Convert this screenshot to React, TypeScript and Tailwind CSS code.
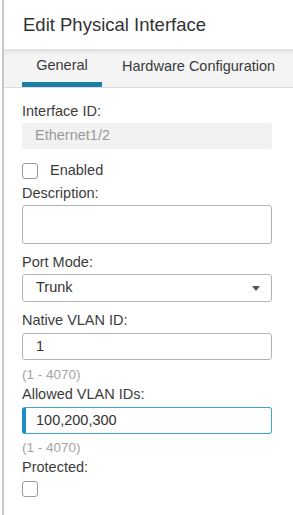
import React from 'react';

const font = { fontFamily: '"Liberation Sans", Arial, sans-serif' };

const Label: React.FC<{ children: React.ReactNode; className?: string }> = ({ children, className = '' }) => (
  <div className={`text-[14.5px] leading-[16px] text-[#3c3c3c] ${className}`}>{children}</div>
);

const Box: React.FC<{ className?: string }> = ({ className = '' }) => (
  <div className={`w-[16px] h-[16px] rounded-[3px] border border-[#9a9a9a] bg-white ${className}`} />
);

export default function App() {
  return (
    <div className="w-[293px] h-[515px] bg-white flex" style={font}>
      <div className="w-[2px] bg-white" />
      <div className="w-[2px] bg-[#c8c8c8]" />
      <div className="flex-1 flex flex-col">
        <div className="h-[49px] flex items-center pl-[19px] text-[18.5px] text-[#333]">
          Edit Physical Interface
        </div>
        <div className="h-[39px] bg-[#f4f4f4] border-b border-[#dcdcdc] flex items-end pl-[18px] relative">
          <div className="absolute left-0 right-0 top-0 h-[6px] bg-gradient-to-b from-[#e0e0e0] to-[#f4f4f4]" />
          <div className="w-[80px] h-full flex flex-col items-center justify-end">
            <span className="text-[14.5px] text-[#3a3a3a] mb-[5px]">General</span>
            <div className="w-full h-[5px] bg-[#1b7fa6]" />
          </div>
          <span className="ml-[20px] text-[14.5px] text-[#3a3a3a] mb-[9px]">Hardware Configuration</span>
        </div>
        <div className="pl-[18px] pr-[21px] flex flex-col">
          <Label className="mt-[15px]">Interface ID:</Label>
          <div className="mt-[4px] h-[26px] rounded-[3px] bg-[#f2f2f2] flex items-center pl-[13px] text-[14.5px] text-[#9a9a9a]">
            Ethernet1/2
          </div>
          <div className="mt-[14px] h-[16px] flex items-center">
            <Box />
            <span className="ml-[12px] text-[14.5px] text-[#3c3c3c]">Enabled</span>
          </div>
          <Label className="mt-[6px]">Description:</Label>
          <div className="mt-[4px] h-[39px] rounded-[3px] border border-[#b4b4b4] bg-white" />
          <Label className="mt-[10px]">Port Mode:</Label>
          <div className="mt-[4px] h-[28px] rounded-[3px] border border-[#b4b4b4] bg-white flex items-center pl-[13px] pr-[11px] text-[14.5px] text-[#333]">
            <span className="flex-1">Trunk</span>
            <svg width="8" height="5" viewBox="0 0 8 5"><path d="M0 0h8L4 5z" fill="#555" /></svg>
          </div>
          <Label className="mt-[10px]">Native VLAN ID:</Label>
          <div className="mt-[5px] h-[27px] rounded-[3px] border border-[#b4b4b4] bg-white flex items-center pl-[13px] text-[14.5px] text-[#333]">
            1
          </div>
          <div className="mt-[7px] text-[13.5px] leading-[15px] text-[#a4a4a4]">(1 - 4070)</div>
          <Label className="mt-[4px]">Allowed VLAN IDs:</Label>
          <div className="mt-[5px] h-[27px] rounded-[3px] border border-[#41a3cf] border-l-[4px] border-l-[#1b8fc0] bg-white flex items-center pl-[10px] text-[14.5px] text-[#333]">
            100,200,300
          </div>
          <div className="mt-[6px] text-[13.5px] leading-[15px] text-[#a4a4a4]">(1 - 4070)</div>
          <Label className="mt-[4px]">Protected:</Label>
          <Box className="mt-[6px]" />
        </div>
      </div>
    </div>
  );
}
